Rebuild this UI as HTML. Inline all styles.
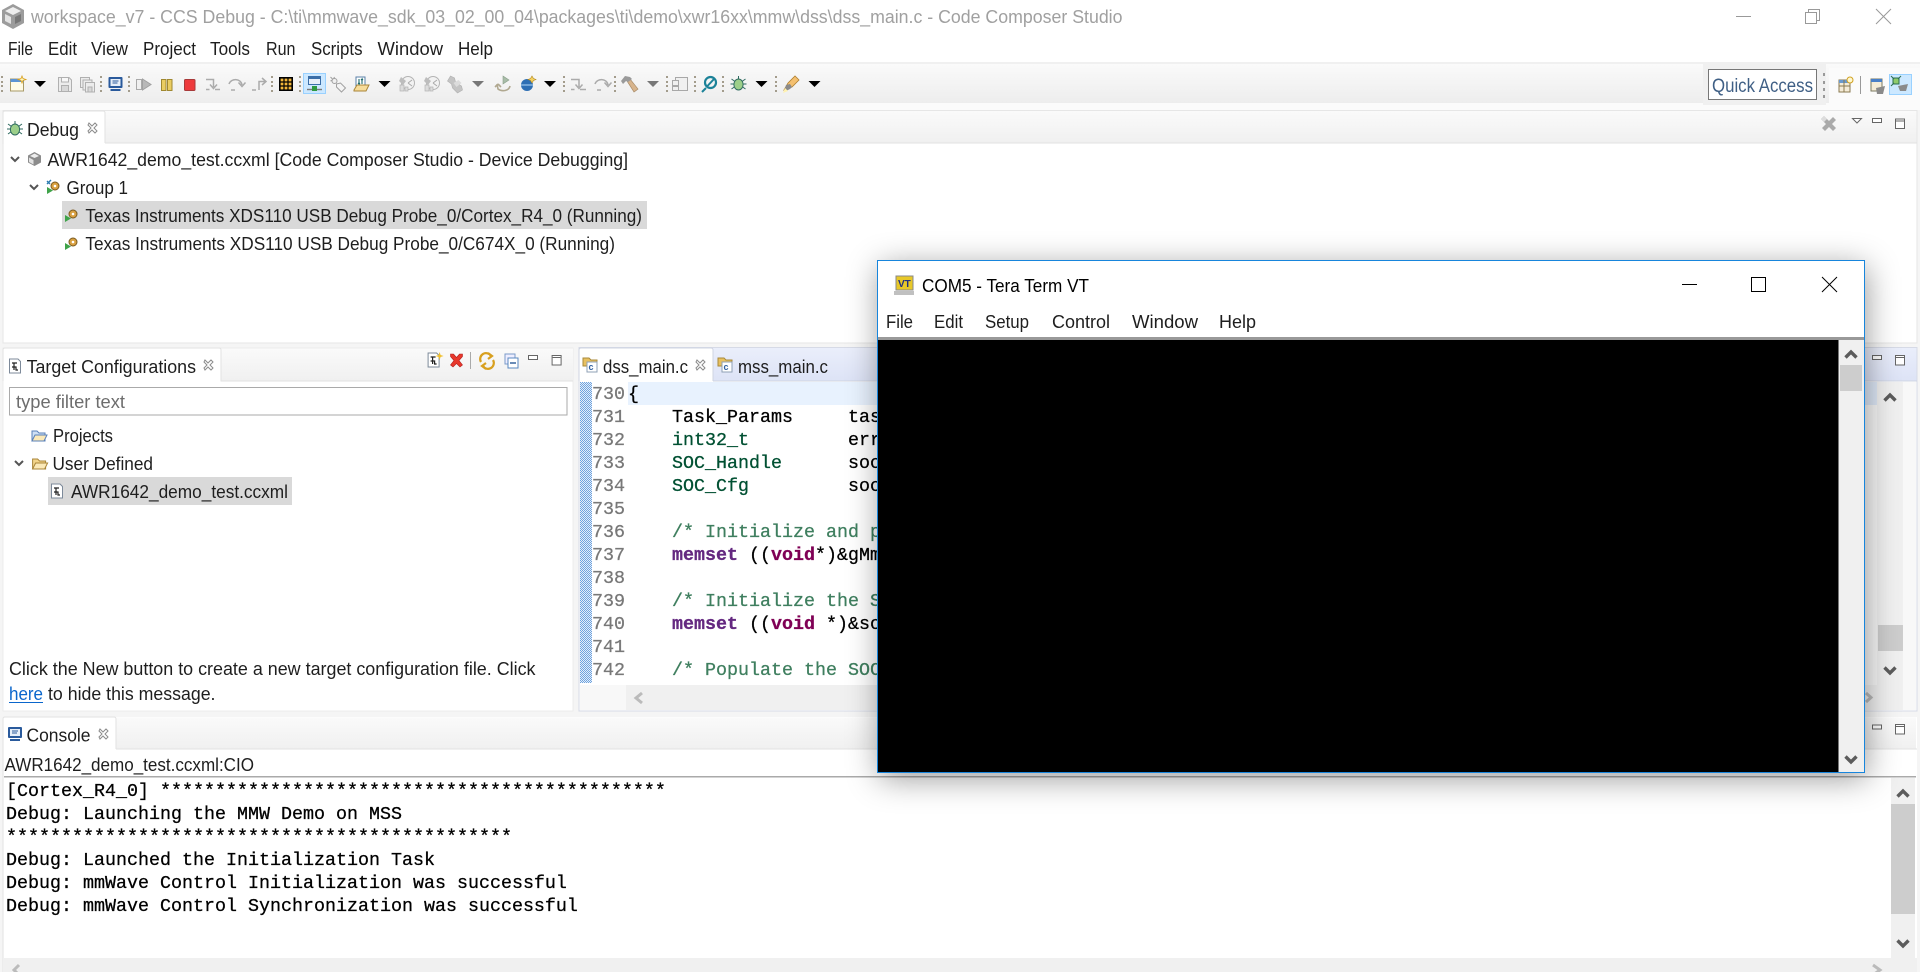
<!DOCTYPE html>
<html><head><meta charset="utf-8"><title>Code Composer Studio</title>
<style>
html,body{margin:0;padding:0;width:1920px;height:972px;overflow:hidden;background:#f5f5f5}
svg{display:block;position:absolute;left:0;top:0}
text{font-family:"Liberation Sans",sans-serif;font-size:18px;fill:#1e1e1e}
.m{font-family:"Liberation Mono",monospace;font-size:18.33px;fill:#000;stroke:#000;stroke-width:.28px;white-space:pre}
.n{fill:#787878;stroke:#787878}.t{fill:#005032;stroke:#005032}.c{fill:#3f7f5f;stroke:#3f7f5f}.k{fill:#7f0055;stroke:#7f0055;font-weight:bold}.f{fill:#642880;stroke:#642880;font-weight:bold}
</style></head><body>
<svg width="1920" height="972" viewBox="0 0 1920 972" xmlns="http://www.w3.org/2000/svg">
<defs>
<linearGradient id="tb" x1="0" y1="0" x2="0" y2="1"><stop offset="0" stop-color="#fafafa"/><stop offset="1" stop-color="#ededed"/></linearGradient>
<linearGradient id="hd" x1="0" y1="0" x2="0" y2="1"><stop offset="0" stop-color="#fafafa"/><stop offset="1" stop-color="#f0f0f0"/></linearGradient>
<linearGradient id="bl" x1="0" y1="0" x2="0" y2="1"><stop offset="0" stop-color="#eaeefb"/><stop offset="1" stop-color="#dde3f6"/></linearGradient>
<pattern id="gut" width="2" height="2" patternUnits="userSpaceOnUse"><rect width="2" height="2" fill="#e4eefa"/><rect width="1" height="1" fill="#6fa3de"/><rect x="1" y="1" width="1" height="1" fill="#6fa3de"/></pattern>
<g id="tri"><path d="M-6 -3H6L0 3Z" fill="#000"/></g>
<g id="trig"><path d="M-6 -3H6L0 3Z" fill="#777"/></g>
<g id="grip"><g fill="#a39c8c"><rect x="-1" y="-8" width="2" height="2"/><rect x="-1" y="-3" width="2" height="2"/><rect x="-1" y="1" width="2" height="2"/><rect x="-1" y="6" width="2" height="2"/></g></g>
<g id="x"><path d="M-4 -5L-1 -2L2 -5L4 -3L1 0L4 3L2 5L-1 2L-4 5L-5 3L-2 0L-5 -3Z" fill="#fff" stroke="#8c8c8c" stroke-width="1"/></g>
<g id="ch"><path d="M-4 -2L0 2L4 -2" fill="none" stroke="#555" stroke-width="2"/></g>
<g id="up"><path d="M-5.5 3.5L0 -2L5.5 3.5" fill="none" stroke="#5c5c5c" stroke-width="3.4"/></g>
<g id="dn"><path d="M-5.5 -3.5L0 2L5.5 -3.5" fill="none" stroke="#5c5c5c" stroke-width="3.4"/></g>
<g id="mn"><rect x="0.5" y="0.5" width="9" height="4" fill="#fff" stroke="#666"/></g>
<g id="mx"><rect x="0.5" y="0.5" width="9" height="9.5" fill="#fff" stroke="#666"/><path d="M1 2.5H9" stroke="#666"/></g>
<g id="thr"><path d="M-7 0L-1 3.5L-7 7Z" fill="#3fa34a"/><circle cx="1" cy="-1" r="4" fill="#d8a040" stroke="#7a5a20"/><circle cx="1" cy="-1" r="1.3" fill="#fff"/></g>
<g id="cfg"><path d="M-5.5 -7H3L5.5 -4.5V7H-5.5Z" fill="#fff" stroke="#7d8a9a"/><path d="M-3 -3H2M-1 -3V4M-3 1H1V4H3" fill="none" stroke="#222" stroke-width="1.2"/></g>
<g id="cf"><path d="M-7 -7H-1L1 -5H7V1H-7Z" fill="#e8c060" stroke="#a98a3a"/><rect x="-3" y="-3" width="10" height="10" fill="#fff" stroke="#8fa0b5"/><text x="-1.5" y="5" style="font-size:9px;fill:#3060a0;font-weight:bold">c</text></g>
<g id="bug"><g stroke="#2f6a60" stroke-width="1" fill="none"><path d="M-7 -5L7 5M-7 5L7 -5M-8 0H8M0 -8V-4"/></g><ellipse rx="4.6" ry="5.5" cy="0.5" fill="#9ccf8a" stroke="#2f6a60"/></g>
<g id="mon"><rect x="-7" y="-7" width="14" height="11" rx="1" fill="#2a5a9c"/><rect x="-5" y="-5" width="10" height="7" fill="#e6eef8"/><path d="M-3 -3H3M-3 -1H2" stroke="#2a5a9c"/><rect x="-5" y="5" width="10" height="2" fill="#2a5a9c"/></g>
<g id="fold"><path d="M-7 -5H-2L0 -3H6V5H-7Z" fill="#f2d48a" stroke="#a98538"/><path d="M-7 5L-4 -1H8L5 5Z" fill="#fbe9b8" stroke="#a98538"/></g>
<g id="bpd"><circle cx="1" cy="-1" r="6.5" fill="#f2f2f2" stroke="#b4b4b4"/><path d="M-6 -7L-1 -3L-4 1L-8 -3Z" fill="#bdbdbd"/><path d="M-7 1H-3V7H-7ZM-2 3H1V7H-2Z" fill="#dcdcdc" stroke="#b4b4b4" stroke-width=".7"/><path d="M1 -1L5 -4M1 -1L5 2" stroke="#aaa"/></g>
</defs>

<!-- window chrome -->
<rect x="0" y="0" width="1920" height="62" fill="#fff"/>
<rect x="0" y="62" width="1920" height="2" fill="#f0f0f0"/>
<rect x="0" y="64" width="1920" height="39" fill="url(#tb)"/>
<rect x="0" y="103" width="1920" height="7" fill="#fbfbfb"/>

<!-- app icon -->
<g transform="translate(13 16)"><path d="M0 -12L11 -6V7L0 13L-11 7V-6Z" fill="#9c9c9c"/><path d="M0 -9L8 -5L0 -1L-8 -5Z" fill="#eee"/><path d="M-8 -2L-2 1V8L-8 5Z" fill="#e2e2e2"/><path d="M8 -2L2 1V8L8 5Z" fill="#777"/></g>
<text x="31" y="23" textLength="1091.5" lengthAdjust="spacingAndGlyphs" style="fill:#a0a0a0">workspace_v7 - CCS Debug - C:\ti\mmwave_sdk_03_02_00_04\packages\ti\demo\xwr16xx\mmw\dss\dss_main.c - Code Composer Studio</text>

<g fill="none" stroke="#999" stroke-width="1">
<path d="M1736 16.5H1751"/><rect x="1805.5" y="12.5" width="11" height="11"/><path d="M1808.5 12V9.5H1819.5V20.5H1817"/><path d="M1876 9L1891 24M1891 9L1876 24"/>
</g>

<!-- menu -->
<g style="fill:#333">
<text x="8" y="55" textLength="25" lengthAdjust="spacingAndGlyphs">File</text>
<text x="48" y="55" textLength="29" lengthAdjust="spacingAndGlyphs">Edit</text>
<text x="91" y="55" textLength="37" lengthAdjust="spacingAndGlyphs">View</text>
<text x="143" y="55" textLength="53" lengthAdjust="spacingAndGlyphs">Project</text>
<text x="210" y="55" textLength="40" lengthAdjust="spacingAndGlyphs">Tools</text>
<text x="266" y="55" textLength="29.5" lengthAdjust="spacingAndGlyphs">Run</text>
<text x="311" y="55" textLength="51.5" lengthAdjust="spacingAndGlyphs">Scripts</text>
<text x="377.5" y="55" textLength="65.5" lengthAdjust="spacingAndGlyphs">Window</text>
<text x="458" y="55" textLength="35" lengthAdjust="spacingAndGlyphs">Help</text>
</g>

<!-- toolbar -->
<g>
<use href="#grip" x="2" y="84"/><use href="#grip" x="101" y="84"/><use href="#grip" x="129" y="84"/><use href="#grip" x="272" y="84"/><use href="#grip" x="300" y="84"/><use href="#grip" x="564" y="84"/><use href="#grip" x="615" y="84"/><use href="#grip" x="667" y="84"/><use href="#grip" x="695" y="84"/><use href="#grip" x="723" y="84"/><use href="#grip" x="776" y="84"/>
<use href="#tri" x="40" y="84"/><use href="#tri" x="384.5" y="84"/><use href="#trig" x="478" y="84"/><use href="#tri" x="550" y="84"/><use href="#trig" x="653" y="84"/><use href="#tri" x="761.5" y="84"/><use href="#tri" x="814.5" y="84"/>
<!-- new -->
<g transform="translate(17 85)"><rect x="-6.5" y="-6" width="13" height="12" fill="#fffbe6" stroke="#a89a68"/><rect x="-6.5" y="-6" width="13" height="3" fill="#5c94d4"/><path d="M5 -9L6 -6.5L9 -5.5L6 -4.5L5 -2L4 -4.5L1 -5.5L4 -6.5Z" fill="#fff6c0" stroke="#d8a020" stroke-width=".8"/></g>
<!-- save -->
<g fill="#ececec" stroke="#b0b0b0"><path d="M58.5 77.5H69L71.5 80V91.5H58.5Z"/><rect x="61.5" y="77.5" width="7" height="4.5" fill="#f8f8f8"/><rect x="61.5" y="85.5" width="7" height="6" fill="#d8d8d8"/>
<path d="M80.5 77.5H89.5V87.5H80.5Z"/><path d="M83 80H92V90H83Z"/><path d="M85.5 82.5H94.5V92H85.5Z"/><rect x="88" y="87" width="4" height="5" fill="#d8d8d8"/></g>
<g transform="translate(115.5 84)"><use href="#mon"/></g>
<!-- resume pause stop -->
<rect x="136.5" y="79.5" width="5" height="10" fill="#f0f0f0" stroke="#aaa"/><path d="M142.5 79L151 84.5L142.5 90Z" fill="#b8b8b8" stroke="#a0a0a0"/>
<rect x="161.5" y="79.5" width="4.5" height="11" fill="#eacd62" stroke="#a08830"/><rect x="167.5" y="79.5" width="4.5" height="11" fill="#eacd62" stroke="#a08830"/>
<rect x="184.5" y="79.5" width="10.5" height="11" rx="1" fill="#ee3a3c" stroke="#a83a3a"/>
<!-- steps -->
<g fill="none" stroke="#ababab" stroke-width="1.5"><path d="M206 79.5H213.5V87M210 84.5L213.5 88.5L217 84.5M206 89.5H209.5M215 89.5H220"/><path d="M229 84C231 78 241 78 242 85M238.5 82.5L242 86.5L245.5 82.5M231 90H235"/><path d="M252 90H256M259 90V81.5H265M262 78L266 81.5L262 85"/></g>
<!-- grid -->
<rect x="279.8" y="77.8" width="12.4" height="12.4" fill="#f2b63a" stroke="#000" stroke-width="1.6"/><path d="M284 77V91M288 77V91M279 82H293M279 86H293" stroke="#000" stroke-width="1.2"/>
<!-- highlighted -->
<rect x="303.5" y="73.5" width="22" height="20" fill="#cce8ff" stroke="#99d1ff"/>
<rect x="308.5" y="76.5" width="12" height="8" fill="#e6eef8" stroke="#3a6ea8"/><rect x="308" y="76" width="13" height="3" fill="#3a6ea8"/><path d="M307 89.5H322" stroke="#7a7a7a" stroke-width="1.4"/><rect x="312" y="86" width="5" height="5" fill="#2f9a40"/>
<g transform="translate(337.5 84)" fill="none" stroke="#a0a0a0"><path d="M-7 -7L-3 -3M-3 -7L-5 -3M-7 -3L-3 -5"/><circle cx="-3" cy="-3" r="2.5" fill="#f0f0f0"/><path d="M-1 0L3 -1L8 4L4 8L-1 3Z" fill="#f4f4f4"/></g>
<g transform="translate(361 84)"><rect x="-5" y="-7" width="9" height="9" fill="#fff" stroke="#5a80a8"/><path d="M-7 6L-4 1H8L5 7H-7Z" fill="#f7dc9a" stroke="#a98538"/><path d="M-2 -5V0L-3 -1M-2 0L-1 -1M1 0V-5L0 -4M1 -5L2 -4" stroke="#1d6a6a" stroke-width="1.1" fill="none"/></g>
<use href="#bpd" x="407" y="84"/><use href="#bpd" x="432" y="84"/>
<g transform="translate(455.5 84)"><path d="M-5 -8L-1 -6L0 -2L6 2L7 6L2 9L-3 4L-4 0L-8 -3Z" fill="#c4c4c4" stroke="#b0b0b0" stroke-width=".6"/><path d="M-2 -1L3 -4L6 -1L1 3Z" fill="#dcdcdc"/></g>
<g transform="translate(503 84)"><path d="M0 -8L6 -4L0 0Z" fill="#a8bca8" stroke="#8aa08a" stroke-width=".6"/><path d="M7 2C6 7 -1 8 -5 5L-6 0M-5 0L-8 3M-5 0L-2 3" fill="none" stroke="#b0a890" stroke-width="1.6"/></g>
<g transform="translate(527 85)"><circle r="6" fill="#2e6fb4"/><path d="M-6 0H6" stroke="#8fbce6" stroke-width="1.4"/><path d="M5 -9L6.5 -6.5L9 -5.5L6.5 -4.5L5 -2L3.5 -4.5L1 -5.5L3.5 -6.5Z" fill="#f4d060" stroke="#b08820" stroke-width=".6"/></g>
<g fill="none" stroke="#ababab" stroke-width="1.5"><path d="M571 79.5H579V87M575.5 84.5L579 88.5L582.5 84.5M571 89.5H574.5M580 89.5H586"/><path d="M595 84C597 78 607 78 608 85M604.5 82.5L608 86.5L611.5 82.5M597 90H601"/></g>
<g transform="translate(629 84)"><path d="M-2 -3L1 -5L9 5L5 8Z" fill="#d8b48c" stroke="#a88c68" stroke-width=".7"/><path d="M-8 -3L-4 -8L1 -7L3 -5L-1 -2L-3 -3L-6 0Z" fill="#9a9a9a"/></g>
<g transform="translate(681 84)" fill="#f0f0f0" stroke="#a8a8a8"><rect x="-5.5" y="-6.5" width="12" height="13"/><rect x="-8.5" y="-3.5" width="6" height="5"/><rect x="-8.5" y="2.5" width="6" height="4"/></g>
<g transform="translate(709 84)" fill="none" stroke="#1c8298" stroke-width="2.2"><circle cx="1.5" cy="-1.5" r="5.5"/><path d="M-3 4L-7 8M-2 2.5L5 -5" stroke-width="2"/></g>
<use href="#bug" x="738.5" y="84"/>
<g transform="translate(791 84)"><path d="M-7 6L-3 -1L4 -8L8 -4L1 3Z" fill="#f4c070" stroke="#b08030" stroke-width=".8"/><path d="M-7 8L-5 1L-1 0L1 3L-1 5Z" fill="#8a8a8a"/><path d="M-8 9L-6 4L-3 7Z" fill="#fff2b0"/></g>
</g>

<!-- Quick access -->
<rect x="1703" y="64" width="123" height="41" fill="#f0f0f0"/>
<rect x="1708.5" y="69.5" width="108" height="30" fill="#fff" stroke="#777"/>
<text x="1712" y="92" textLength="101" lengthAdjust="spacingAndGlyphs" style="fill:#3f5f85;font-size:19px">Quick Access</text>
<rect x="1829" y="68" width="91" height="36" fill="#fbfbfb"/>
<g fill="#999"><rect x="1823" y="73" width="2" height="3"/><rect x="1823" y="81" width="2" height="3"/><rect x="1823" y="88" width="2" height="3"/><rect x="1823" y="95" width="2" height="3"/></g>
<g transform="translate(1845 86)"><rect x="-6" y="-6" width="11" height="12" fill="#f5ecd8" stroke="#8a7a50"/><rect x="-6" y="-6" width="11" height="3" fill="#6a9ad0"/><path d="M-1 -6V6M-6 0H5" stroke="#8a7a50"/><circle cx="5" cy="-6" r="3" fill="#fff8d0" stroke="#d0a020"/></g>
<path d="M1860.5 76V94" stroke="#999"/>
<g transform="translate(1877 86)"><rect x="-6" y="-7" width="11" height="12" fill="#f5ecd8" stroke="#7a7a60"/><rect x="-6" y="-7" width="11" height="3" fill="#4a80c8"/><path d="M-1 2L8 0L6 8H0Z" fill="#8a8a8a"/></g>
<rect x="1889.5" y="74.5" width="22" height="20" fill="#cce8ff" stroke="#99d1ff"/>
<g transform="translate(1900 84)"><rect x="-7" y="-6" width="6" height="6" fill="#8fca6a" stroke="#2d6f50"/><path d="M-9 -8L-6 -5M-9 2L-6 -1M1 -8L-2 -5" stroke="#2d6f50"/><path d="M-2 2L8 0L6 7H0Z" fill="#8a8a8a"/></g>

<!-- Debug panel -->
<rect x="3" y="110.5" width="1914" height="232.5" fill="#fff" stroke="#e6e6e6"/>
<rect x="3.5" y="111" width="1913" height="32" fill="url(#hd)"/>
<rect x="3" y="111" width="102" height="33" fill="#fff"/>
<path d="M3 144V113Q3 111 5 111H103Q105 111 105 113V143H1917" fill="none" stroke="#e2e2e2"/>
<rect x="4" y="143" width="101" height="2" fill="#fff"/>
<use href="#bug" x="15" y="129"/>
<text x="27" y="136" textLength="52" lengthAdjust="spacingAndGlyphs">Debug</text>
<use href="#x" x="93" y="128"/>
<g transform="translate(1828 123)"><path d="M-7 -4L-4 -7L1 -2L5 -6L8 -3L4 1L8 5L5 8L1 4L-3 8L-6 5L-2 1Z" fill="#aaa"/><path d="M-7 -4L-4 -7L-1 -4L-4 -1Z" fill="#ddd"/></g>
<path d="M1852.5 118.5H1861.5L1857 123Z" fill="#fff" stroke="#666"/>
<use href="#mn" x="1872" y="118"/><use href="#mx" x="1895" y="118.5"/>

<use href="#ch" x="15" y="159"/>
<g transform="translate(34.5 159)"><path d="M0 -7L6.5 -3.5V3.5L0 7L-6.5 3.5V-3.5Z" fill="#8c8c8c"/><path d="M0 -5.5L4.5 -3L0 -1L-4.5 -3Z" fill="#eee"/><path d="M-5.5 -1.5L-1 1V5.5L-5.5 3Z" fill="#e2e2e2"/></g>
<text x="47.5" y="166" textLength="580.5" lengthAdjust="spacingAndGlyphs">AWR1642_demo_test.ccxml [Code Composer Studio - Device Debugging]</text>
<use href="#ch" x="34" y="187"/>
<g transform="translate(54 187)"><use href="#thr" x="0" y="0"/><path d="M-7 -6L-4 -3M-7 -3L-3 -7" stroke="#2a7ab0" stroke-width="1.4"/></g>
<text x="66.5" y="194" textLength="61.5" lengthAdjust="spacingAndGlyphs">Group 1</text>
<rect x="62" y="201" width="585" height="28" fill="#d9d9d9"/>
<use href="#thr" x="72" y="215"/>
<text x="85.4" y="222" textLength="556.6" lengthAdjust="spacingAndGlyphs">Texas Instruments XDS110 USB Debug Probe_0/Cortex_R4_0 (Running)</text>
<use href="#thr" x="72" y="243"/>
<text x="85.4" y="250" textLength="529.6" lengthAdjust="spacingAndGlyphs">Texas Instruments XDS110 USB Debug Probe_0/C674X_0 (Running)</text>

<!-- Target Configurations panel -->
<rect x="3" y="348" width="570" height="363" fill="#fff" stroke="#ececec"/>
<rect x="221" y="348.5" width="352" height="32" fill="url(#hd)"/>
<path d="M3 381V350Q3 348 5 348H219Q221 348 221 350V381H573" fill="none" stroke="#e2e2e2"/>
<use href="#cfg" x="15" y="366"/>
<text x="26.6" y="373" textLength="169.4" lengthAdjust="spacingAndGlyphs">Target Configurations</text>
<use href="#x" x="209" y="365"/>
<g transform="translate(433.6 360)"><use href="#cfg"/><path d="M6 -8L7 -5L10 -4L7 -3L6 0L5 -3L2 -4L5 -5Z" fill="#f0c030"/></g>
<path d="M450.5 354L453.5 354L456.5 357.5L459.5 354L462.5 354L462.5 356.5L459 360.5L462.5 365L460 367L456.5 363.5L453 367L450.5 365L454 360.5L450.5 356.5Z" fill="#e8382c" stroke="#b02020" stroke-width=".6"/>
<path d="M470.5 352V369" stroke="#aaa"/>
<g transform="translate(487 361)" fill="none" stroke="#d8a020" stroke-width="2.2"><path d="M-6 1A5 5 0 0 1 4 -5M1 -8L5 -5L1 -2"/><path d="M6 -1A5 5 0 0 1 -4 5M-1 8L-5 5L-1 2"/></g>
<g transform="translate(511 361)"><rect x="-6" y="-7" width="10" height="10" fill="#eef" stroke="#7a9ac8"/><rect x="-3" y="-3" width="10" height="10" fill="#fff" stroke="#5a88c0"/><path d="M-1 2H5" stroke="#2a5a98" stroke-width="1.4"/></g>
<use href="#mn" x="528" y="355"/><use href="#mx" x="551.6" y="355"/>
<rect x="9.5" y="387.5" width="557.5" height="27.5" fill="#fff" stroke="#aaa"/>
<text x="16" y="408" textLength="109" lengthAdjust="spacingAndGlyphs" style="fill:#6d6d6d">type filter text</text>
<g transform="translate(39 436)"><path d="M-7 -5H-2L0 -3H6V5H-7Z" fill="#cfe0f4" stroke="#5a80b8"/><path d="M-7 5L-4 -1H8L5 5Z" fill="#fbe9b8" stroke="#5a80b8"/></g>
<text x="53" y="442" textLength="60" lengthAdjust="spacingAndGlyphs">Projects</text>
<use href="#ch" x="19" y="463"/>
<use href="#fold" x="39.6" y="464"/>
<text x="52.5" y="470" textLength="100.5" lengthAdjust="spacingAndGlyphs">User Defined</text>
<rect x="48" y="477" width="244" height="28" fill="#d9d9d9"/>
<use href="#cfg" x="57" y="491"/>
<text x="71" y="498" textLength="217" lengthAdjust="spacingAndGlyphs">AWR1642_demo_test.ccxml</text>
<text x="9" y="675" textLength="526.5" lengthAdjust="spacingAndGlyphs">Click the New button to create a new target configuration file. Click</text>
<text x="9" y="700" textLength="34" lengthAdjust="spacingAndGlyphs" style="fill:#0a66cc">here</text>
<path d="M9 702.5H43" stroke="#0a66cc" stroke-width="1"/>
<text x="48" y="700" textLength="167.5" lengthAdjust="spacingAndGlyphs">to hide this message.</text>

<!-- Editor panel -->
<rect x="579" y="347.5" width="1338" height="363.5" fill="#fff" stroke="#d6dae6"/>
<rect x="579.5" y="348" width="1337" height="33" fill="url(#bl)"/>
<path d="M579 381V350Q579 348 581 348H711Q713 348 713 350V381" fill="#fff" stroke="#cfd4e2"/>
<path d="M713 381H1917" stroke="#cfd4e2"/>
<use href="#cf" x="590" y="365"/>
<text x="603" y="373" textLength="85" lengthAdjust="spacingAndGlyphs">dss_main.c</text>
<use href="#x" x="701" y="365"/>
<use href="#cf" x="725" y="365"/>
<text x="738" y="373" textLength="90" lengthAdjust="spacingAndGlyphs">mss_main.c</text>
<use href="#mn" x="1872" y="355"/><use href="#mx" x="1895" y="355"/>
<rect x="580" y="382" width="12" height="301" fill="url(#gut)"/>
<rect x="1864" y="405" width="14" height="280" fill="#f8f8f8"/>
<rect x="628" y="382" width="1249" height="23" fill="#dfe9f8"/>
<rect x="628" y="382" width="260" height="23" fill="#e8f2fe"/>
<rect x="1877" y="382" width="26" height="303" fill="#f0f0f0"/>
<rect x="1903" y="382" width="13" height="328" fill="#f8f8f8"/>
<rect x="1878" y="625" width="25" height="26" fill="#cdcdcd"/>
<use href="#up" x="1890" y="397"/><use href="#dn" x="1890" y="671"/>
<rect x="580" y="685" width="46" height="25" fill="#f8f8f8"/>
<rect x="626" y="685" width="1277" height="25" fill="#f0f0f0"/>
<path d="M642 693L636 698L642 703" fill="none" stroke="#bbb" stroke-width="3"/>
<path d="M1866 693L1871 697.5L1866 702" fill="none" stroke="#bbb" stroke-width="3"/>
<text class="m n" x="592" y="399">730</text><text class="m n" x="592" y="422">731</text><text class="m n" x="592" y="445">732</text><text class="m n" x="592" y="468">733</text><text class="m n" x="592" y="491">734</text><text class="m n" x="592" y="514">735</text><text class="m n" x="592" y="537">736</text><text class="m n" x="592" y="560">737</text><text class="m n" x="592" y="583">738</text><text class="m n" x="592" y="606">739</text><text class="m n" x="592" y="629">740</text><text class="m n" x="592" y="652">741</text><text class="m n" x="592" y="675">742</text>
<text class="m" x="628" y="399">{</text>
<text class="m" x="672" y="422">Task_Params</text><text class="m" x="848" y="422">tas</text>
<text class="m t" x="672" y="445">int32_t</text><text class="m" x="848" y="445">err</text>
<text class="m t" x="672" y="468">SOC_Handle</text><text class="m" x="848" y="468">soc</text>
<text class="m t" x="672" y="491">SOC_Cfg</text><text class="m" x="848" y="491">soc</text>
<text class="m c" x="672" y="537">/* Initialize and p</text>
<text class="m" x="672" y="560"><tspan class="f">memset</tspan> ((<tspan class="k">void</tspan>*)&amp;gMm</text>
<text class="m c" x="672" y="606">/* Initialize the S</text>
<text class="m" x="672" y="629"><tspan class="f">memset</tspan> ((<tspan class="k">void</tspan> *)&amp;soc</text>
<text class="m c" x="672" y="675">/* Populate the SOC</text>

<!-- Console panel -->
<rect x="3" y="717" width="1914" height="255" fill="#fff"/>
<rect x="116" y="717.5" width="1800" height="32" fill="url(#hd)"/>
<path d="M3 972V719Q3 717 5 717H114Q116 717 116 719V749H1917" fill="none" stroke="#e2e2e2"/>
<rect x="4" y="749" width="112" height="2" fill="#fff"/>
<use href="#mon" x="15" y="734"/>
<text x="26.5" y="741.5" textLength="64" lengthAdjust="spacingAndGlyphs">Console</text>
<use href="#x" x="104" y="734"/>
<use href="#mn" x="1872" y="724.5"/><use href="#mx" x="1895" y="724"/>
<text x="4.5" y="771" textLength="249.5" lengthAdjust="spacingAndGlyphs">AWR1642_demo_test.ccxml:CIO</text>
<rect x="4" y="776" width="1912" height="1.5" fill="#aaa"/>
<rect x="1891" y="778" width="24" height="180" fill="#f0f0f0"/>
<rect x="1891" y="804" width="24" height="110" fill="#cdcdcd"/>
<use href="#up" x="1903" y="793"/><use href="#dn" x="1903" y="944"/>
<rect x="3" y="958" width="1914" height="14" fill="#f0f0f0"/>
<path d="M19 965L14 970L19 975" fill="none" stroke="#bbb" stroke-width="3"/>
<path d="M1873 965L1880 970L1873 975" fill="none" stroke="#bbb" stroke-width="3"/>
<text class="m" x="6" y="796">[Cortex_R4_0] **********************************************</text>
<text class="m" x="6" y="819">Debug: Launching the MMW Demo on MSS</text>
<text class="m" x="6" y="842">**********************************************</text>
<text class="m" x="6" y="865">Debug: Launched the Initialization Task</text>
<text class="m" x="6" y="888">Debug: mmWave Control Initialization was successful</text>
<text class="m" x="6" y="911">Debug: mmWave Control Synchronization was successful</text>

<!-- Tera Term window -->
<rect x="877.5" y="260.5" width="987" height="512" fill="#fff" style="filter:drop-shadow(2px 6px 16px rgba(0,0,0,.4))"/>
<rect x="878" y="337" width="986" height="3" fill="#999"/>
<rect x="878" y="340" width="961" height="432" fill="#000"/>
<rect x="1839" y="340" width="25" height="432" fill="#f0f0f0"/>
<rect x="1838" y="340" width="1" height="432" fill="#777"/>
<rect x="1840" y="365" width="22" height="26" fill="#cdcdcd"/>
<use href="#up" x="1851" y="354"/><use href="#dn" x="1851" y="760"/>
<rect x="877.5" y="260.5" width="987" height="512" fill="none" stroke="#1785dc"/>
<g transform="translate(894 276)"><rect x="2" y="0" width="17" height="14" fill="#e8c828" stroke="#888"/><rect x="0" y="15" width="20" height="4" fill="#c0c0c0"/><text x="4" y="11" style="font-size:10px;font-weight:bold;fill:#203080">VT</text></g>
<text x="922" y="292" textLength="167" lengthAdjust="spacingAndGlyphs" style="fill:#000">COM5 - Tera Term VT</text>
<g style="fill:#222">
<text x="886" y="328" textLength="27" lengthAdjust="spacingAndGlyphs">File</text>
<text x="934" y="328" textLength="29" lengthAdjust="spacingAndGlyphs">Edit</text>
<text x="985" y="328" textLength="44" lengthAdjust="spacingAndGlyphs">Setup</text>
<text x="1052" y="328" textLength="58" lengthAdjust="spacingAndGlyphs">Control</text>
<text x="1132" y="328" textLength="66" lengthAdjust="spacingAndGlyphs">Window</text>
<text x="1219" y="328" textLength="37" lengthAdjust="spacingAndGlyphs">Help</text>
</g>
<g fill="none" stroke="#000" stroke-width="1">
<path d="M1682 284.5H1697"/><rect x="1751.5" y="277.5" width="14" height="14"/><path d="M1822 277L1837 292M1837 277L1822 292"/>
</g>
</svg>
</body></html>
